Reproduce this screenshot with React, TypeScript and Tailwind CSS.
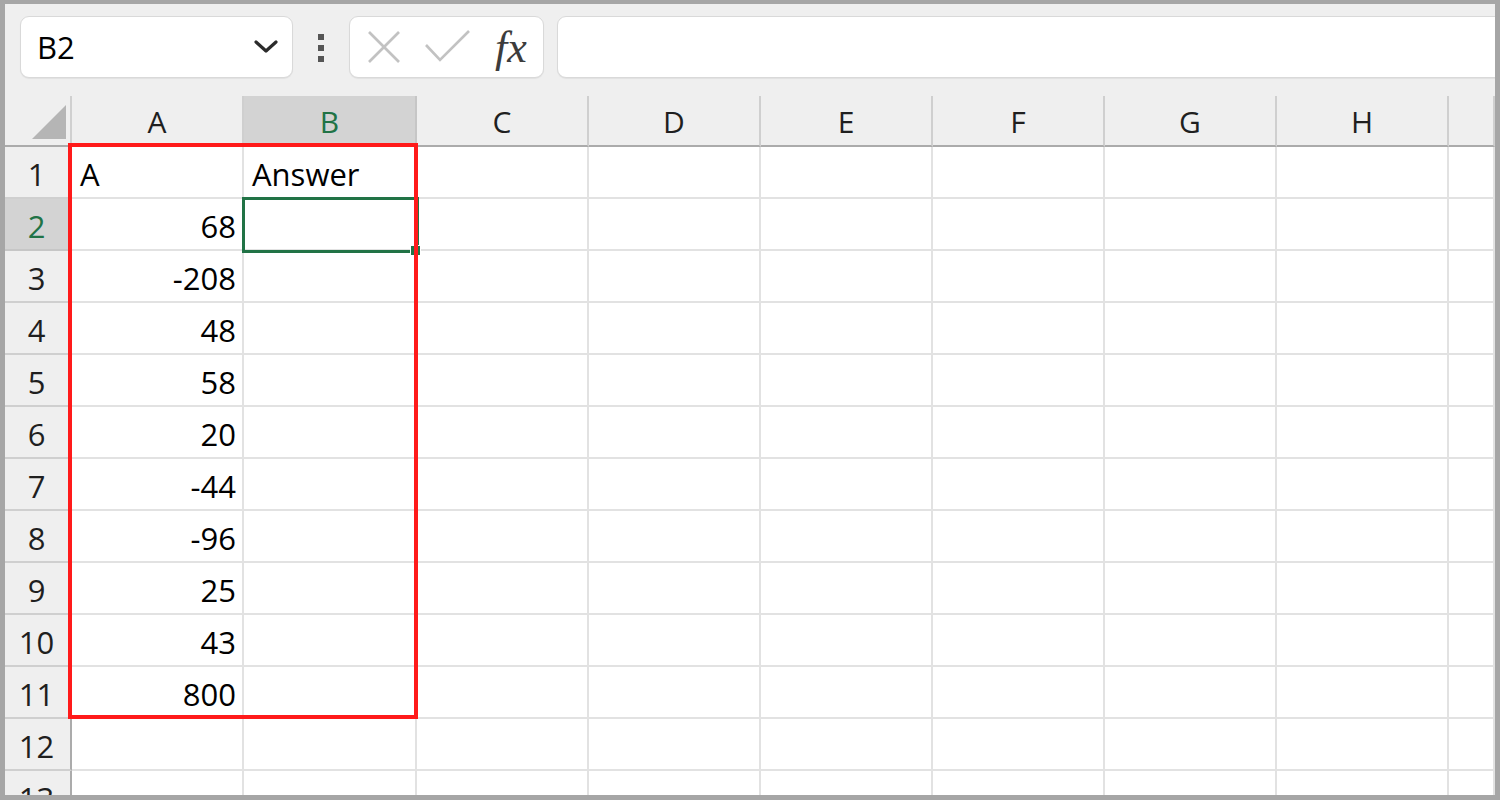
const COLS = ["A", "B", "C", "D", "E", "F", "G", "H", ""];
const VALUES: Record<number, string> = {
  2: "68",
  3: "-208",
  4: "48",
  5: "58",
  6: "20",
  7: "-44",
  8: "-96",
  9: "25",
  10: "43",
  11: "800",
};
const ROWS = [1, 2, 3, 4, 5, 6, 7, 8, 9, 10, 11, 12, 13];

const font = { fontFamily: '"Open Sans", "Noto Sans", sans-serif' };

const Toolbar = () => {
  return (
    <div className="flex h-[92px] shrink-0 items-start bg-[#efefef] pl-[15px] pt-[12px]">
      {/* name box */}
      <div className="flex h-[62px] w-[273px] items-center justify-between rounded-[9px] border border-[#d9d9d9] bg-white pl-[16px] pr-[14px] shadow-[0_1px_1px_rgba(0,0,0,0.06)]">
        <span className="text-[31px] leading-none text-black">B2</span>
        <svg width="24" height="14" viewBox="0 0 24 14" fill="none">
          <polyline points="2,2 12,11 22,2" stroke="#2b2b2b" strokeWidth="3.2" strokeLinecap="round" strokeLinejoin="round" />
        </svg>
      </div>
      {/* dots */}
      <div className="ml-[25px] mt-[18px] flex flex-col gap-[5px]">
        <div className="h-[6px] w-[6px] bg-[#555]" />
        <div className="h-[6px] w-[6px] bg-[#555]" />
        <div className="h-[6px] w-[6px] bg-[#555]" />
      </div>
      {/* cancel / enter / fx */}
      <div className="ml-[25px] flex h-[62px] w-[195px] items-center rounded-[9px] border border-[#d9d9d9] bg-white pl-[17px] shadow-[0_1px_1px_rgba(0,0,0,0.06)]">
        <svg width="34" height="34" viewBox="0 0 34 34" fill="none">
          <line x1="2" y1="2" x2="32" y2="32" stroke="#c2c2c2" strokeWidth="2.6" />
          <line x1="32" y1="2" x2="2" y2="32" stroke="#c2c2c2" strokeWidth="2.6" />
        </svg>
        <svg className="ml-[24px]" width="46" height="34" viewBox="0 0 46 34" fill="none">
          <polyline points="1,15 15,30 44,1" stroke="#c2c2c2" strokeWidth="2.6" fill="none" />
        </svg>
        <span
          className="ml-[24px] mt-[2px] text-[44px] italic leading-none text-[#3c3c3c]"
          style={{ fontFamily: '"Liberation Serif", "DejaVu Serif", serif' }}
        >
          fx
        </span>
      </div>
      {/* formula input */}
      <div className="ml-[13px] mr-[-30px] h-[62px] flex-1 rounded-[9px] border border-[#d9d9d9] bg-white shadow-[0_1px_1px_rgba(0,0,0,0.06)]" />
    </div>
  );
};

const Grid = () => {
  return (
    <div className="grid grid-cols-[67px_172px_173px_172px_172px_172px_172px_172px_172px_1fr] grid-rows-[51px_repeat(13,52px)]">
      {/* corner */}
      <div className="relative border-b-2 border-r-2 border-b-[#ababab] border-r-[#d0d0d0] bg-[#efefef]">
        <svg className="absolute left-[27px] top-[9px]" width="34" height="34" viewBox="0 0 34 34">
          <polygon points="34,0 34,34 0,34" fill="#b5b5b5" />
        </svg>
      </div>
      {COLS.map((c, i) => {
        const sel = c === "B";
        return (
          <div
            key={"h" + i}
            className={
              sel
                ? "flex items-end justify-center border-b-2 border-r-2 border-b-[#217346] border-r-[#c6c6c6] bg-[#d3d3d3] pb-[8px] text-[30px] leading-none text-[#217346]"
                : "flex items-end justify-center border-b-2 border-r-2 border-b-[#ababab] border-r-[#cfcfcf] bg-[#efefef] pb-[8px] text-[30px] leading-none text-[#1f1f1f]"
            }
          >
            {c}
          </div>
        );
      })}
      {ROWS.map((r) => {
        const sel = r === 2;
        return [
          <div
            key={"r" + r}
            className={
              sel
                ? "flex items-end justify-center border-b-2 border-r-2 border-b-[#c6c6c6] border-r-[#217346] bg-[#d3d3d3] pb-[7px] pr-[2px] text-[31px] leading-none text-[#217346]"
                : "flex items-end justify-center border-b-2 border-r-2 border-b-[#cfcfcf] border-r-[#ababab] bg-[#efefef] pb-[7px] pr-[2px] text-[31px] leading-none text-[#1f1f1f]"
            }
          >
            {r}
          </div>,
          ...COLS.map((c, i) => {
            let text = "";
            let right = false;
            if (r === 1 && c === "A") text = "A";
            if (r === 1 && c === "B") text = "Answer";
            if (c === "A" && VALUES[r]) {
              text = VALUES[r];
              right = true;
            }
            return (
              <div
                key={r + "-" + i}
                className={
                  right
                    ? "flex items-end justify-end border-b-2 border-r-2 border-[#e2e2e2] bg-white pb-[7px] pr-[6px] text-[31px] leading-none text-black"
                    : "flex items-end justify-start border-b-2 border-r-2 border-[#e2e2e2] bg-white pb-[7px] pl-[8px] text-[31px] leading-none text-black"
                }
              >
                {text}
              </div>
            );
          }),
        ];
      })}
    </div>
  );
};

const App = () => {
  return (
    <div className="h-[800px] w-[1500px] bg-[#a6a6a6] pl-[5px] pt-[4px]" style={font}>
      <div className="relative flex h-[791px] w-[1490px] flex-col overflow-hidden bg-white">
        <Toolbar />
        <Grid />
        {/* active cell */}
        <div className="absolute left-[237px] top-[193px] h-[56px] w-[177px] border-[3px] border-[#217346]" />
        <div className="absolute left-[405px] top-[241px] h-[11px] w-[11px] border border-white bg-[#217346]" />
        {/* highlight rectangle */}
        <div className="absolute left-[63px] top-[139px] h-[576px] w-[350px] border-4 border-[#ff1a1a]" />
      </div>
    </div>
  );
};

export default App;
